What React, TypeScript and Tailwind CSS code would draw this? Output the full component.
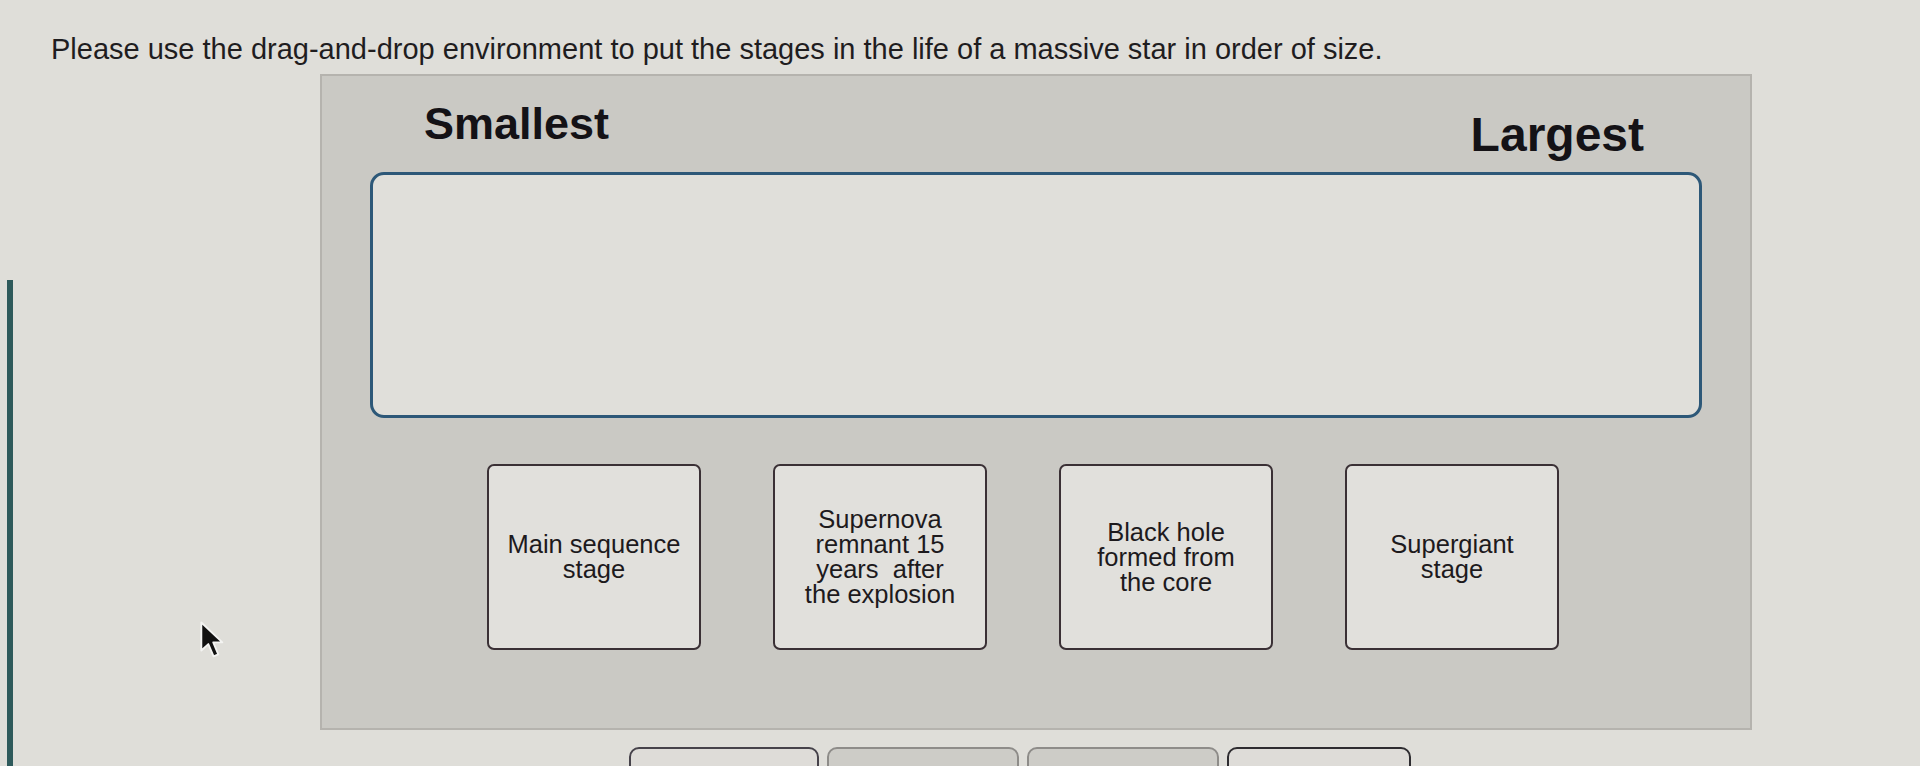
const stages = [
  ['Main sequence', 'stage'],
  ['Supernova', 'remnant 15', 'years\u00a0\u00a0after', 'the explosion'],
  ['Black hole', 'formed from', 'the core'],
  ['Supergiant', 'stage'],
]

function StageCard({ lines }: { lines: string[] }) {
  return (
    <div className="flex h-[186px] w-[214px] items-center justify-center rounded-[7px] border-2 border-[#3a3035] bg-[#e1e0dc]">
      <p className="text-center text-[25.5px] leading-[25px] text-[#1d1a1d]">
        {lines.map((l, i) => (
          <span key={i} className="block">
            {l}
          </span>
        ))}
      </p>
    </div>
  )
}

function Cursor() {
  return (
    <svg className="absolute left-[199px] top-[620px] h-[40px] w-[28px]" viewBox="0 0 24 34">
      <path
        d="M2 2 L2 26 L8 20.5 L12.5 31 L16.5 29.3 L12.2 19 L20 19 Z"
        fill="#111"
        stroke="#f4f4f2"
        strokeWidth={1.6}
        strokeLinejoin="round"
      />
    </svg>
  )
}

export default function App() {
  return (
    <div className="relative flex h-[766px] w-[1920px] overflow-hidden bg-[#dfded9] font-['Liberation_Sans',Arial,sans-serif] text-[#1c1a1c]">
      {/* screen edge */}
      <div className="flex w-[14px] shrink-0 flex-col pl-[7px] pt-[280px]">
        <div className="w-[6px] flex-1 bg-[#2e5a5b]" />
      </div>

      <div className="flex flex-1 flex-col">
        <p className="pl-[37px] pt-[32px] text-[29px] leading-[34px] text-[#1f1d1f]">
          Please use the drag-and-drop environment to put the stages in the life of a massive star in order of size.
        </p>

        <div className="ml-[306px] mt-[8px] flex h-[656px] w-[1432px] shrink-0 flex-col border-2 border-[#b5b3ae] bg-[#cac9c4] px-[48px]">
          <div className="flex h-[96px] items-start justify-between pl-[54px] pr-[58px] pt-[22px]">
            <span className="text-[45px] font-bold leading-[52px] text-[#141216]">Smallest</span>
            <span className="pt-[10px] text-[48px] font-bold leading-[54px] text-[#141216]">Largest</span>
          </div>

          <div className="h-[246px] rounded-[14px] border-[3px] border-[#2d5878] bg-[#e0dfda]" />

          <div className="flex gap-[72px] pl-[117px] pt-[46px]">
            {stages.map((s, i) => (
              <StageCard key={i} lines={s} />
            ))}
          </div>
        </div>

        <div className="ml-[615px] mt-[17px] flex gap-[8px]">
          <div className="h-[44px] w-[190px] rounded-t-[10px] border-2 border-[#46424a] bg-[#dedcd8] pt-[13px] text-center text-[22px] leading-[26px]">
            Submit
          </div>
          <div className="h-[44px] w-[192px] rounded-t-[10px] border-2 border-[#8e8c89] bg-[#cdccc7]" />
          <div className="h-[44px] w-[192px] rounded-t-[10px] border-2 border-[#8e8c89] bg-[#cdccc7]" />
          <div className="h-[44px] w-[184px] rounded-t-[10px] border-2 border-[#2e2c30] bg-[#dedcd8]" />
        </div>
      </div>

      <Cursor />
    </div>
  )
}
